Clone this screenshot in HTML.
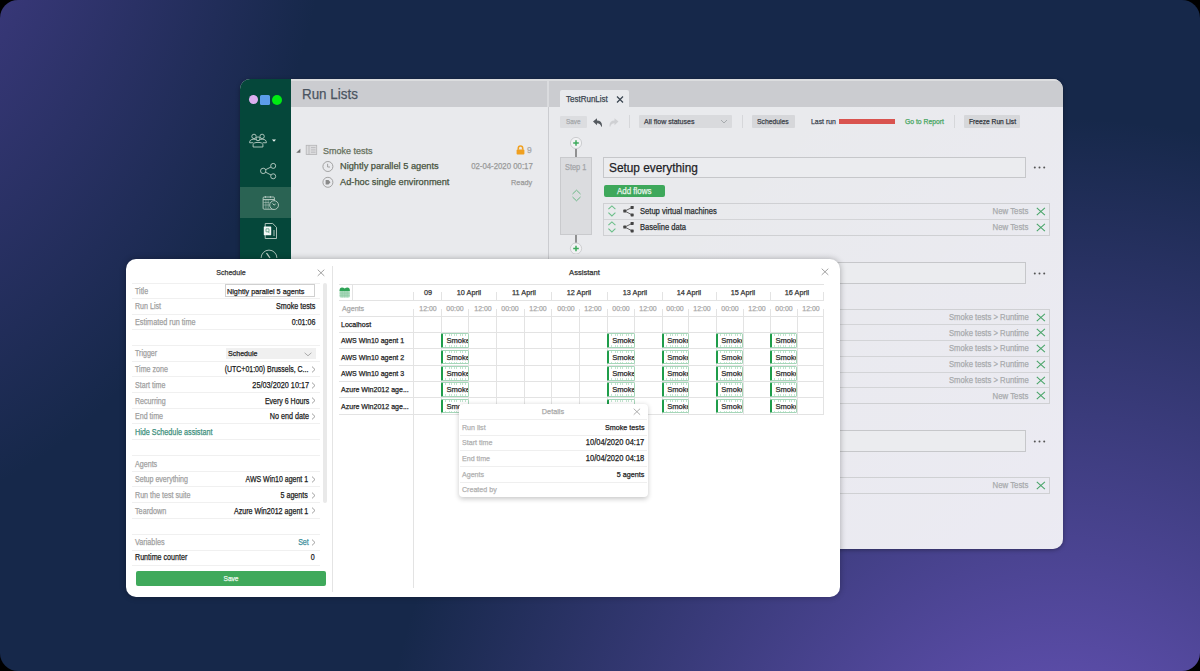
<!DOCTYPE html>
<html><head><meta charset="utf-8">
<style>
*{box-sizing:border-box;margin:0;padding:0}
html,body{width:1200px;height:671px;overflow:hidden;background:#000}
body{font-family:"Liberation Sans",sans-serif;position:relative}
#bg{position:absolute;left:0;top:0;width:1200px;height:671px;border-radius:18px;overflow:hidden;
background:
 radial-gradient(ellipse 516px 771px at -173px -243px, rgba(84,68,158,1) 0%, rgba(84,68,158,0) 100%),
 radial-gradient(ellipse 687px 733px at 1061px 851px, rgba(111,87,195,1) 0%, rgba(111,87,195,0) 100%),
 #16284a;}
.a{position:absolute}
.t{position:absolute;white-space:nowrap;line-height:1;-webkit-text-stroke:0.25px currentColor}
#main{position:absolute;left:240px;top:79px;width:823px;height:470px;border-radius:10px;overflow:hidden;background:#e9eaed;box-shadow:0 1px 4px rgba(0,0,0,.35)}
#modal{position:absolute;left:126px;top:259px;width:714px;height:338.3px;border-radius:10px;overflow:hidden;background:#fff;box-shadow:0 0 6px rgba(0,0,0,.3)}
.in{position:absolute;left:0;top:0;width:1200px;height:671px}
</style></head><body>
<div id="bg">

<div id="main"><div class="in" style="left:-240px;top:-79px">
<div class="a" style="left:240.00px;top:79.00px;width:51.00px;height:470.00px;background:#05473a"></div>
<div class="a" style="left:248.80px;top:94.60px;width:9.60px;height:9.80px;border-radius:50%;background:#dcaef0"></div>
<div class="a" style="left:260.20px;top:94.70px;width:10.00px;height:10.10px;border-radius:1.5px;background:#5c9de9"></div>
<div class="a" style="left:271.80px;top:94.60px;width:10.30px;height:10.30px;border-radius:50%;background:#00ec12"></div>
<div class="a" style="left:240.00px;top:186.80px;width:51.00px;height:30.80px;background:#2a6353"></div>
<div class="a" style="left:291.00px;top:79.00px;width:772.00px;height:27.50px;background:#cbccd0"></div>
<div class="a" style="left:548.00px;top:106.50px;width:1.00px;height:442.50px;background:#cbccd0"></div>
<div class="a" style="left:547.20px;top:79.00px;width:1.80px;height:27.50px;background:#dadbde"></div>
<div class="a" style="left:291.00px;top:79.00px;width:772.00px;height:1.60px;background:#dcdddf"></div>
<div class="a" style="left:291.00px;top:106.50px;width:772.00px;height:442.50px;background:linear-gradient(135deg, rgba(240,235,255,0) 40%, rgba(240,235,255,0.32) 100%)"></div>
<div class="t" style="left:302.00px;top:87.00px;font-size:14.74px;color:#4a5460;transform:scaleX(0.9091);transform-origin:0 0;">Run Lists</div>
<div class="a" style="left:560.00px;top:90.00px;width:69.00px;height:17.00px;background:#e9eaed;border-radius:2px 2px 0 0"></div>
<div class="t" style="left:566.00px;top:95.00px;font-size:8.80px;color:#3a4550;transform:scaleX(0.9091);transform-origin:0 0;">TestRunList</div>
<svg class="a" style="left:616.00px;top:96.00px;" width="8" height="7" viewBox="0 0 8 7"><path d="M1 0.5L7 6.5M7 0.5L1 6.5" stroke="#3a4550" stroke-width="1.2"/></svg>
<svg class="a" style="left:240.00px;top:128.00px;" width="51" height="131" viewBox="0 0 51 131"><g fill="none" stroke="#bccfc6" stroke-width="0.9">
<circle cx="14" cy="8.4" r="2.2"/><circle cx="22.1" cy="8.4" r="2.2"/><circle cx="18" cy="10.8" r="1.9"/>
<path d="M13.3 14.75 H9.6 Q9.6 11.2 13.8 11.2 Q15.6 11.2 16.4 12.2"/><path d="M22.7 14.75 H26.4 Q26.4 11.2 22.2 11.2 Q20.4 11.2 19.6 12.2"/>
<path d="M13.1 19 L13.1 16.6 Q13.5 14.4 18 14.4 Q22.5 14.4 22.9 16.6 L22.9 19 Z"/>
<path d="M31.9 11.5 L36 11.5 L34 13.8 Z" fill="#f0f6f2" stroke="none"/>
<circle cx="33.2" cy="37.9" r="2.5"/><circle cx="23.2" cy="42.9" r="2.7"/><circle cx="33.2" cy="48.3" r="2.5"/>
<path d="M25.6 41.7 L31 39 M25.6 44.2 L31 47"/>
<rect x="23.1" y="69.0" width="11.3" height="12.2" rx="1"/><path d="M25.4 68.2 v1.6 M30.4 68.2 v1.6 M23.1 71.6 H34.4" stroke-width="1"/><path d="M25.9 72 v8.6 M28.2 72 v8.6 M23.5 74.5 h6 M23.5 77 h6" stroke-width="0.5"/>
<circle cx="34.1" cy="77.1" r="4.4" fill="#2a6353"/><path d="M32.6 75.4 L34.1 77.1 L35.6 76" stroke-width="1"/>
<path d="M25.2 95.5 h7.5 l3.8 3.8 v11.2 h-11.3 Z"/>
<rect x="23.8" y="98.5" width="7.4" height="8.8" rx="0.6" fill="#f4f8f6" stroke="none"/><path d="M26 100.8 h3 v3 h-3 Z M28.2 103.6 l1.2 1.6" stroke="#5a9a80" stroke-width="0.8"/>
<path d="M33 103 h2 M33 105 h2 M33 107 h2"/>
<path d="M21.1 130 A7.9 7.9 0 0 1 36.9 130"/><path d="M26.5 125 L30 130" stroke-width="1.3"/></g></svg>
<svg class="a" style="left:295.00px;top:144.00px;" width="24" height="12" viewBox="0 0 24 12"><path d="M1.2 8.7 L5.4 8.7 L5.4 4.8 Z" fill="#707070"/>
<rect x="11.2" y="1.3" width="10.5" height="9.2" fill="#dcdcde" stroke="#b4b4b6" stroke-width="0.8"/>
<path d="M14 1.3 V10.5 M16 3.6 h4.5 M16 5.9 h4.5 M16 8.2 h4.5" stroke="#b4b4b6" stroke-width="0.8"/></svg>
<div class="t" style="left:323.00px;top:147.00px;font-size:9.00px;color:#66705c;">Smoke tests</div>
<svg class="a" style="left:515.00px;top:144.00px;" width="11" height="12" viewBox="0 0 11 12"><path d="M3.3 5.8 V4.2 A2.2 2.2 0 0 1 7.7 4.2 V5.8" fill="none" stroke="#f0a020" stroke-width="1.6"/>
<rect x="1.6" y="5.6" width="7.8" height="5" rx="0.8" fill="#f0a020"/></svg>
<div class="t" style="left:527.00px;top:146.00px;font-size:8.50px;color:#a8a8a8;">9</div>
<svg class="a" style="left:320.00px;top:160.00px;" width="16" height="30" viewBox="0 0 16 30"><g fill="none" stroke="#9a9a9a" stroke-width="0.9"><circle cx="7.9" cy="6.5" r="5"/><path d="M7.6 3.8 V7 H10"/>
<circle cx="7.9" cy="22.3" r="5"/></g><path d="M5.6 20 L8.5 20 L10.5 22.2 L8.4 24.4 L5.6 24.4 Z" fill="#8a8a8a"/></svg>
<div class="t" style="left:340.00px;top:162.00px;font-size:8.79px;color:#485440;transform:scaleX(1.0526);transform-origin:0 0;">Nightly parallel 5 agents</div>
<div class="t" style="left:340.00px;top:178.00px;font-size:8.79px;color:#485440;transform:scaleX(1.0526);transform-origin:0 0;">Ad-hoc single environment</div>
<div class="t" style="right:667.70px;top:162.00px;font-size:8.58px;color:#9a9a9a;transform:scaleX(0.9091);transform-origin:100% 0;">02-04-2020 00:17</div>
<div class="t" style="right:667.70px;top:179.00px;font-size:8.03px;color:#9a9a9a;transform:scaleX(0.9091);transform-origin:100% 0;">Ready</div>
<div class="a" style="left:560.00px;top:115.50px;width:27.00px;height:12.30px;background:#dcdde0;border-radius:1px"></div>
<div class="t" style="left:565.50px;top:118.00px;font-size:7.04px;color:#a4a7aa;transform:scaleX(0.9091);transform-origin:0 0;">Save</div>
<svg class="a" style="left:591.00px;top:117.00px;" width="30" height="11" viewBox="0 0 30 11"><path d="M2 4.6 L6 1.3 V3.4 Q10.8 3.4 11 8.3 Q11 9.8 10.4 10 Q9.6 6.5 6 6.2 V8.2 Z" fill="#555a60"/>
<path d="M27.5 4.6 L23.5 1.3 V3.4 Q18.7 3.4 18.5 8.3 Q18.5 9.8 19.1 10 Q19.9 6.5 23.5 6.2 V8.2 Z" fill="#cfd0d3"/></svg>
<div class="a" style="left:628.50px;top:115.00px;width:1.00px;height:13.00px;background:#d6d7da"></div>
<div class="a" style="left:638.50px;top:115.30px;width:93.50px;height:12.50px;background:#d9dadd;border-radius:1px"></div>
<div class="t" style="left:644.20px;top:118.00px;font-size:7.74px;color:#3a4048;transform:scaleX(0.9091);transform-origin:0 0;">All flow statuses</div>
<svg class="a" style="left:720.00px;top:119.00px;" width="8" height="5" viewBox="0 0 8 5"><path d="M1 1 L4 4 L7 1" fill="none" stroke="#9a9ea2" stroke-width="0.8"/></svg>
<div class="a" style="left:741.80px;top:115.00px;width:1.00px;height:13.00px;background:#d6d7da"></div>
<div class="a" style="left:751.70px;top:115.30px;width:43.60px;height:12.50px;background:#d6d7da;border-radius:1px"></div>
<div class="t" style="left:757.00px;top:118.00px;font-size:7.48px;color:#3a4048;transform:scaleX(0.9091);transform-origin:0 0;">Schedules</div>
<div class="t" style="left:811.00px;top:118.00px;font-size:7.59px;color:#3a4550;transform:scaleX(0.9091);transform-origin:0 0;">Last run</div>
<div class="a" style="left:839.40px;top:119.40px;width:56.00px;height:5.00px;background:#d9534f"></div>
<div class="t" style="left:905.00px;top:118.00px;font-size:7.48px;color:#45a560;transform:scaleX(0.9091);transform-origin:0 0;">Go to Report</div>
<div class="a" style="left:953.60px;top:115.00px;width:1.00px;height:13.00px;background:#d6d7da"></div>
<div class="a" style="left:964.00px;top:115.40px;width:56.00px;height:12.20px;background:#d6d7da;border-radius:1px"></div>
<div class="t" style="left:969.00px;top:118.00px;font-size:7.33px;color:#2f353c;transform:scaleX(0.9091);transform-origin:0 0;">Freeze Run List</div>
<svg class="a" style="left:566.00px;top:134.00px;" width="20" height="120" viewBox="0 0 20 120"><defs><g id="plus"><circle cx="10" cy="9" r="5.6" fill="#f2f2f4" stroke="#c8c9cc" stroke-width="0.9"/><path d="M10 6.2 V11.8 M7.2 9 H12.8" stroke="#3daa5c" stroke-width="1.5"/></g></defs>
<path d="M10 15 V23 M10 101 V109" stroke="#6a6a6a" stroke-width="1.4"/><use href="#plus"/><use href="#plus" y="105.5"/></svg>
<div class="a" style="left:559.80px;top:156.50px;width:32.70px;height:78.00px;background:#dbdcdf;border:1px solid #c9cacd"></div>
<div class="t" style="left:565.20px;top:164.00px;font-size:8.14px;color:#a3a5a8;transform:scaleX(0.9091);transform-origin:0 0;">Step 1</div>
<svg class="a" style="left:571.00px;top:189.00px;" width="11" height="13" viewBox="0 0 11 13"><path d="M1.5 5 L5.5 1.2 L9.5 5 M1.5 8 L5.5 11.8 L9.5 8" fill="none" stroke="#5fb47c" stroke-width="0.9"/></svg>
<div class="a" style="left:603.30px;top:156.50px;width:422.50px;height:21.50px;border:1px solid #c6c7ca;background:#ebecef"></div>
<svg class="a" style="left:1033.00px;top:164.75px;" width="14" height="5" viewBox="0 0 14 5"><circle cx="1.8" cy="2.5" r="1" fill="#555"/><circle cx="6.5" cy="2.5" r="1" fill="#555"/><circle cx="11.2" cy="2.5" r="1" fill="#555"/></svg>
<div class="t" style="left:609.00px;top:161.00px;font-size:13.04px;color:#1e2226;transform:scaleX(0.9091);transform-origin:0 0;">Setup everything</div>
<div class="a" style="left:603.60px;top:184.50px;width:61.70px;height:12.20px;background:#3ea85b;border-radius:2px"></div>
<div class="t" style="left:617.00px;top:187.00px;font-size:8.76px;color:#e8f4ec;transform:scaleX(0.9091);transform-origin:0 0;">Add flows</div>
<svg width="0" height="0" style="position:absolute"><defs>
<g id="frow"><path d="M2.4 6.1 L5.9 2.9 L9.4 6.1 M2.4 9.7 L5.9 12.9 L9.4 9.7" fill="none" stroke="#6cbf8a" stroke-width="1.1"/>
<path d="M18.75 8.05 L26.15 4.4 M18.75 8.05 L26.15 11.9" stroke="#555" stroke-width="0.9"/>
<rect x="17.3" y="6.6" width="2.9" height="2.9" rx="0.6" fill="#444"/><rect x="24.6" y="2.9" width="3.1" height="3" rx="0.6" fill="#444"/><rect x="24.6" y="10.4" width="3.1" height="3" rx="0.6" fill="#444"/></g>
</defs></svg>
<div class="a" style="left:603.30px;top:203.10px;width:446.50px;height:32.50px;border:1px solid #cfd0d3"></div>
<svg class="a" style="left:606.00px;top:203.10px;" width="30" height="15" viewBox="0 0 30 15"><use href="#frow"/></svg>
<div class="t" style="left:640.00px;top:207.00px;font-size:8.36px;color:#2a2e30;transform:scaleX(0.9091);transform-origin:0 0;">Setup virtual machines</div>
<div class="t" style="right:171.20px;top:207.00px;font-size:8.58px;color:#a8aaad;transform:scaleX(0.9091);transform-origin:100% 0;">New Tests</div>
<svg class="a" style="left:1036.00px;top:207.10px;" width="10" height="9" viewBox="0 0 10 9"><path d="M0.8 0.8 L8.9 8.2 M8.9 0.8 L0.8 8.2" stroke="#4aa56a" stroke-width="1.1"/></svg>
<div class="a" style="left:604.00px;top:218.85px;width:445.00px;height:1.00px;background:#d3d4d7"></div>
<svg class="a" style="left:606.00px;top:218.85px;" width="30" height="15" viewBox="0 0 30 15"><use href="#frow"/></svg>
<div class="t" style="left:640.00px;top:223.00px;font-size:8.36px;color:#2a2e30;transform:scaleX(0.9091);transform-origin:0 0;">Baseline data</div>
<div class="t" style="right:171.20px;top:223.00px;font-size:8.58px;color:#a8aaad;transform:scaleX(0.9091);transform-origin:100% 0;">New Tests</div>
<svg class="a" style="left:1036.00px;top:222.85px;" width="10" height="9" viewBox="0 0 10 9"><path d="M0.8 0.8 L8.9 8.2 M8.9 0.8 L0.8 8.2" stroke="#4aa56a" stroke-width="1.1"/></svg>
<div class="a" style="left:603.30px;top:261.70px;width:422.50px;height:22.60px;border:1px solid #c6c7ca;background:#ebecef"></div>
<svg class="a" style="left:1033.00px;top:270.50px;" width="14" height="5" viewBox="0 0 14 5"><circle cx="1.8" cy="2.5" r="1" fill="#555"/><circle cx="6.5" cy="2.5" r="1" fill="#555"/><circle cx="11.2" cy="2.5" r="1" fill="#555"/></svg>
<div class="a" style="left:603.30px;top:308.70px;width:446.50px;height:95.50px;border:1px solid #cfd0d3"></div>
<svg class="a" style="left:606.00px;top:308.70px;" width="30" height="15" viewBox="0 0 30 15"><use href="#frow"/></svg>
<div class="t" style="right:171.20px;top:313.00px;font-size:8.47px;color:#a8aaad;transform:scaleX(0.9091);transform-origin:100% 0;">Smoke tests &gt; Runtime</div>
<svg class="a" style="left:1036.00px;top:312.70px;" width="10" height="9" viewBox="0 0 10 9"><path d="M0.8 0.8 L8.9 8.2 M8.9 0.8 L0.8 8.2" stroke="#4aa56a" stroke-width="1.1"/></svg>
<div class="a" style="left:604.00px;top:324.45px;width:445.00px;height:1.00px;background:#d3d4d7"></div>
<svg class="a" style="left:606.00px;top:324.45px;" width="30" height="15" viewBox="0 0 30 15"><use href="#frow"/></svg>
<div class="t" style="right:171.20px;top:329.00px;font-size:8.47px;color:#a8aaad;transform:scaleX(0.9091);transform-origin:100% 0;">Smoke tests &gt; Runtime</div>
<svg class="a" style="left:1036.00px;top:328.45px;" width="10" height="9" viewBox="0 0 10 9"><path d="M0.8 0.8 L8.9 8.2 M8.9 0.8 L0.8 8.2" stroke="#4aa56a" stroke-width="1.1"/></svg>
<div class="a" style="left:604.00px;top:340.20px;width:445.00px;height:1.00px;background:#d3d4d7"></div>
<svg class="a" style="left:606.00px;top:340.20px;" width="30" height="15" viewBox="0 0 30 15"><use href="#frow"/></svg>
<div class="t" style="right:171.20px;top:344.00px;font-size:8.47px;color:#a8aaad;transform:scaleX(0.9091);transform-origin:100% 0;">Smoke tests &gt; Runtime</div>
<svg class="a" style="left:1036.00px;top:344.20px;" width="10" height="9" viewBox="0 0 10 9"><path d="M0.8 0.8 L8.9 8.2 M8.9 0.8 L0.8 8.2" stroke="#4aa56a" stroke-width="1.1"/></svg>
<div class="a" style="left:604.00px;top:355.95px;width:445.00px;height:1.00px;background:#d3d4d7"></div>
<svg class="a" style="left:606.00px;top:355.95px;" width="30" height="15" viewBox="0 0 30 15"><use href="#frow"/></svg>
<div class="t" style="right:171.20px;top:360.00px;font-size:8.47px;color:#a8aaad;transform:scaleX(0.9091);transform-origin:100% 0;">Smoke tests &gt; Runtime</div>
<svg class="a" style="left:1036.00px;top:359.95px;" width="10" height="9" viewBox="0 0 10 9"><path d="M0.8 0.8 L8.9 8.2 M8.9 0.8 L0.8 8.2" stroke="#4aa56a" stroke-width="1.1"/></svg>
<div class="a" style="left:604.00px;top:371.70px;width:445.00px;height:1.00px;background:#d3d4d7"></div>
<svg class="a" style="left:606.00px;top:371.70px;" width="30" height="15" viewBox="0 0 30 15"><use href="#frow"/></svg>
<div class="t" style="right:171.20px;top:376.00px;font-size:8.47px;color:#a8aaad;transform:scaleX(0.9091);transform-origin:100% 0;">Smoke tests &gt; Runtime</div>
<svg class="a" style="left:1036.00px;top:375.70px;" width="10" height="9" viewBox="0 0 10 9"><path d="M0.8 0.8 L8.9 8.2 M8.9 0.8 L0.8 8.2" stroke="#4aa56a" stroke-width="1.1"/></svg>
<div class="a" style="left:604.00px;top:387.45px;width:445.00px;height:1.00px;background:#d3d4d7"></div>
<svg class="a" style="left:606.00px;top:387.45px;" width="30" height="15" viewBox="0 0 30 15"><use href="#frow"/></svg>
<div class="t" style="right:171.20px;top:392.00px;font-size:8.58px;color:#a8aaad;transform:scaleX(0.9091);transform-origin:100% 0;">New Tests</div>
<svg class="a" style="left:1036.00px;top:391.45px;" width="10" height="9" viewBox="0 0 10 9"><path d="M0.8 0.8 L8.9 8.2 M8.9 0.8 L0.8 8.2" stroke="#4aa56a" stroke-width="1.1"/></svg>
<div class="a" style="left:603.30px;top:430.00px;width:422.50px;height:22.40px;border:1px solid #c6c7ca;background:#ebecef"></div>
<svg class="a" style="left:1033.00px;top:438.70px;" width="14" height="5" viewBox="0 0 14 5"><circle cx="1.8" cy="2.5" r="1" fill="#555"/><circle cx="6.5" cy="2.5" r="1" fill="#555"/><circle cx="11.2" cy="2.5" r="1" fill="#555"/></svg>
<div class="a" style="left:603.30px;top:476.80px;width:446.50px;height:16.75px;border:1px solid #cfd0d3"></div>
<svg class="a" style="left:606.00px;top:476.80px;" width="30" height="15" viewBox="0 0 30 15"><use href="#frow"/></svg>
<div class="t" style="right:171.20px;top:481.00px;font-size:8.58px;color:#a8aaad;transform:scaleX(0.9091);transform-origin:100% 0;">New Tests</div>
<svg class="a" style="left:1036.00px;top:480.80px;" width="10" height="9" viewBox="0 0 10 9"><path d="M0.8 0.8 L8.9 8.2 M8.9 0.8 L0.8 8.2" stroke="#4aa56a" stroke-width="1.1"/></svg>
</div></div>
<div id="modal"><div class="in" style="left:-126px;top:-259px">
<div class="a" style="left:331.50px;top:266.00px;width:1.00px;height:326.00px;background:#e4e4e4"></div>
<div class="t" style="left:-69.50px;width:600px;text-align:center;top:269.00px;font-size:7.76px;color:#333;transform:scaleX(0.9091);transform-origin:50% 0;">Schedule</div>
<svg class="a" style="left:316.50px;top:268.80px;" width="8" height="8" viewBox="0 0 8 8"><path d="M0.7 0.7 L7.3 6.9 M7.3 0.7 L0.7 6.9" stroke="#8a8a8a" stroke-width="0.8"/></svg>
<div class="a" style="left:322.80px;top:283.00px;width:4.20px;height:220.00px;background:#e9e9e9;border-radius:2px"></div>
<div class="a" style="left:131.80px;top:282.70px;width:188.20px;height:1.00px;background:#f0f0f0"></div>
<div class="a" style="left:131.80px;top:298.10px;width:188.20px;height:1.00px;background:#f0f0f0"></div>
<div class="a" style="left:131.80px;top:313.70px;width:188.20px;height:1.00px;background:#f0f0f0"></div>
<div class="a" style="left:131.80px;top:329.30px;width:188.20px;height:1.00px;background:#f0f0f0"></div>
<div class="a" style="left:131.80px;top:345.00px;width:188.20px;height:1.00px;background:#f0f0f0"></div>
<div class="a" style="left:131.80px;top:360.50px;width:188.20px;height:1.00px;background:#f0f0f0"></div>
<div class="a" style="left:131.80px;top:376.10px;width:188.20px;height:1.00px;background:#f0f0f0"></div>
<div class="a" style="left:131.80px;top:391.70px;width:188.20px;height:1.00px;background:#f0f0f0"></div>
<div class="a" style="left:131.80px;top:407.50px;width:188.20px;height:1.00px;background:#f0f0f0"></div>
<div class="a" style="left:131.80px;top:423.10px;width:188.20px;height:1.00px;background:#f0f0f0"></div>
<div class="a" style="left:131.80px;top:439.10px;width:188.20px;height:1.00px;background:#f0f0f0"></div>
<div class="a" style="left:131.80px;top:455.00px;width:188.20px;height:1.00px;background:#f0f0f0"></div>
<div class="a" style="left:131.80px;top:470.70px;width:188.20px;height:1.00px;background:#f0f0f0"></div>
<div class="a" style="left:131.80px;top:486.30px;width:188.20px;height:1.00px;background:#f0f0f0"></div>
<div class="a" style="left:131.80px;top:502.00px;width:188.20px;height:1.00px;background:#f0f0f0"></div>
<div class="a" style="left:131.80px;top:518.00px;width:188.20px;height:1.00px;background:#f0f0f0"></div>
<div class="a" style="left:131.80px;top:533.80px;width:188.20px;height:1.00px;background:#f0f0f0"></div>
<div class="a" style="left:131.80px;top:549.50px;width:188.20px;height:1.00px;background:#f0f0f0"></div>
<div class="a" style="left:131.80px;top:565.10px;width:188.20px;height:1.00px;background:#f0f0f0"></div>
<div class="t" style="left:135.00px;top:287.00px;font-size:8.52px;color:#a0a0a0;transform:scaleX(0.8333);transform-origin:0 0;">Title</div>
<div class="a" style="left:224.70px;top:284.20px;width:90.00px;height:12.80px;border:1px solid #d0d0d0;background:#fff"></div>
<div class="t" style="left:226.80px;top:288.00px;font-size:7.99px;color:#222;transform:scaleX(0.9091);transform-origin:0 0;">Nightly parallel 5 agents</div>
<div class="t" style="left:135.00px;top:302.00px;font-size:8.52px;color:#a0a0a0;transform:scaleX(0.8333);transform-origin:0 0;">Run List</div>
<div class="t" style="right:885.00px;top:302.00px;font-size:8.62px;color:#1a1a1a;transform:scaleX(0.8333);transform-origin:100% 0;">Smoke tests</div>
<div class="t" style="left:135.00px;top:318.00px;font-size:8.71px;color:#a0a0a0;transform:scaleX(0.8333);transform-origin:0 0;">Estimated run time</div>
<div class="t" style="right:885.00px;top:318.00px;font-size:8.52px;color:#1a1a1a;transform:scaleX(0.8333);transform-origin:100% 0;">0:01:06</div>
<div class="t" style="left:135.00px;top:349.00px;font-size:8.51px;color:#a0a0a0;transform:scaleX(0.8333);transform-origin:0 0;">Trigger</div>
<div class="a" style="left:225.50px;top:348.00px;width:90.00px;height:11.20px;background:#f0f0f0"></div>
<div class="t" style="left:227.70px;top:350.00px;font-size:7.78px;color:#222;transform:scaleX(0.9091);transform-origin:0 0;">Schedule</div>
<svg class="a" style="left:303.50px;top:351.80px;" width="8" height="5" viewBox="0 0 8 5"><path d="M0.6 0.8 L4 3.8 L7.4 0.8" fill="none" stroke="#999" stroke-width="0.8"/></svg>
<div class="t" style="left:135.00px;top:365.00px;font-size:8.52px;color:#a0a0a0;transform:scaleX(0.8333);transform-origin:0 0;">Time zone</div>
<div class="t" style="right:891.20px;top:365.00px;font-size:8.36px;color:#1a1a1a;transform:scaleX(0.8333);transform-origin:100% 0;">(UTC+01:00) Brussels, C...</div>
<svg class="a" style="left:311.00px;top:365.70px;" width="5" height="7" viewBox="0 0 5 7"><path d="M1 0.6 L4 3.5 L1 6.4" fill="none" stroke="#888" stroke-width="0.8"/></svg>
<div class="t" style="left:135.00px;top:381.00px;font-size:8.52px;color:#a0a0a0;transform:scaleX(0.8333);transform-origin:0 0;">Start time</div>
<div class="t" style="right:891.20px;top:381.00px;font-size:8.76px;color:#1a1a1a;transform:scaleX(0.8333);transform-origin:100% 0;">25/03/2020 10:17</div>
<svg class="a" style="left:311.00px;top:381.50px;" width="5" height="7" viewBox="0 0 5 7"><path d="M1 0.6 L4 3.5 L1 6.4" fill="none" stroke="#888" stroke-width="0.8"/></svg>
<div class="t" style="left:135.00px;top:397.00px;font-size:8.52px;color:#a0a0a0;transform:scaleX(0.8333);transform-origin:0 0;">Recurring</div>
<div class="t" style="right:891.20px;top:397.00px;font-size:8.42px;color:#1a1a1a;transform:scaleX(0.8333);transform-origin:100% 0;">Every 6 Hours</div>
<svg class="a" style="left:311.00px;top:397.20px;" width="5" height="7" viewBox="0 0 5 7"><path d="M1 0.6 L4 3.5 L1 6.4" fill="none" stroke="#888" stroke-width="0.8"/></svg>
<div class="t" style="left:135.00px;top:412.00px;font-size:8.52px;color:#a0a0a0;transform:scaleX(0.8333);transform-origin:0 0;">End time</div>
<div class="t" style="right:891.20px;top:412.00px;font-size:8.62px;color:#1a1a1a;transform:scaleX(0.8333);transform-origin:100% 0;">No end date</div>
<svg class="a" style="left:311.00px;top:412.90px;" width="5" height="7" viewBox="0 0 5 7"><path d="M1 0.6 L4 3.5 L1 6.4" fill="none" stroke="#888" stroke-width="0.8"/></svg>
<div class="t" style="left:135.00px;top:428.00px;font-size:8.69px;color:#3d8f7c;transform:scaleX(0.8333);transform-origin:0 0;">Hide Schedule assistant</div>
<div class="t" style="left:135.00px;top:460.00px;font-size:8.56px;color:#a0a0a0;transform:scaleX(0.8333);transform-origin:0 0;">Agents</div>
<div class="t" style="left:135.00px;top:475.00px;font-size:8.47px;color:#a0a0a0;transform:scaleX(0.8333);transform-origin:0 0;">Setup everything</div>
<div class="t" style="right:891.70px;top:475.00px;font-size:8.38px;color:#1a1a1a;transform:scaleX(0.8333);transform-origin:100% 0;">AWS Win10 agent 1</div>
<svg class="a" style="left:311.00px;top:476.00px;" width="5" height="7" viewBox="0 0 5 7"><path d="M1 0.6 L4 3.5 L1 6.4" fill="none" stroke="#888" stroke-width="0.8"/></svg>
<div class="t" style="left:135.00px;top:491.00px;font-size:8.57px;color:#a0a0a0;transform:scaleX(0.8333);transform-origin:0 0;">Run the test suite</div>
<div class="t" style="right:891.70px;top:491.00px;font-size:8.57px;color:#1a1a1a;transform:scaleX(0.8333);transform-origin:100% 0;">5 agents</div>
<svg class="a" style="left:311.00px;top:491.60px;" width="5" height="7" viewBox="0 0 5 7"><path d="M1 0.6 L4 3.5 L1 6.4" fill="none" stroke="#888" stroke-width="0.8"/></svg>
<div class="t" style="left:135.00px;top:507.00px;font-size:8.69px;color:#a0a0a0;transform:scaleX(0.8333);transform-origin:0 0;">Teardown</div>
<div class="t" style="right:891.70px;top:507.00px;font-size:8.56px;color:#1a1a1a;transform:scaleX(0.8333);transform-origin:100% 0;">Azure Win2012 agent 1</div>
<svg class="a" style="left:311.00px;top:507.30px;" width="5" height="7" viewBox="0 0 5 7"><path d="M1 0.6 L4 3.5 L1 6.4" fill="none" stroke="#888" stroke-width="0.8"/></svg>
<div class="t" style="left:135.00px;top:538.00px;font-size:8.70px;color:#a0a0a0;transform:scaleX(0.8333);transform-origin:0 0;">Variables</div>
<div class="t" style="right:891.70px;top:538.00px;font-size:8.52px;color:#3d8f9c;transform:scaleX(0.8333);transform-origin:100% 0;">Set</div>
<svg class="a" style="left:311.00px;top:538.60px;" width="5" height="7" viewBox="0 0 5 7"><path d="M1 0.6 L4 3.5 L1 6.4" fill="none" stroke="#888" stroke-width="0.8"/></svg>
<div class="t" style="left:135.00px;top:553.00px;font-size:8.57px;color:#222;transform:scaleX(0.8333);transform-origin:0 0;">Runtime counter</div>
<div class="t" style="right:885.20px;top:553.00px;font-size:8.52px;color:#1a1a1a;transform:scaleX(0.8333);transform-origin:100% 0;">0</div>
<div class="a" style="left:135.60px;top:571.40px;width:190.00px;height:14.60px;background:#3fa95b;border-radius:2px"></div>
<div class="t" style="left:-69.40px;width:600px;text-align:center;top:575.00px;font-size:7.26px;color:#eef7f0;transform:scaleX(0.9091);transform-origin:50% 0;">Save</div>
<div class="t" style="left:284.50px;width:600px;text-align:center;top:269.00px;font-size:7.60px;color:#333;">Assistant</div>
<svg class="a" style="left:821.00px;top:268.30px;" width="8" height="8" viewBox="0 0 8 8"><path d="M0.7 0.7 L7.3 6.9 M7.3 0.7 L0.7 6.9" stroke="#8a8a8a" stroke-width="0.8"/></svg>
<div class="a" style="left:338.50px;top:283.50px;width:485.50px;height:1.00px;background:#e3e3e3"></div>
<div class="a" style="left:338.50px;top:299.50px;width:485.50px;height:1.00px;background:#e3e3e3"></div>
<div class="a" style="left:338.50px;top:315.80px;width:485.50px;height:1.00px;background:#e3e3e3"></div>
<div class="a" style="left:338.50px;top:332.10px;width:485.50px;height:1.00px;background:#e3e3e3"></div>
<div class="a" style="left:338.50px;top:348.40px;width:485.50px;height:1.00px;background:#e3e3e3"></div>
<div class="a" style="left:338.50px;top:364.80px;width:485.50px;height:1.00px;background:#e3e3e3"></div>
<div class="a" style="left:338.50px;top:381.10px;width:485.50px;height:1.00px;background:#e3e3e3"></div>
<div class="a" style="left:338.50px;top:397.40px;width:485.50px;height:1.00px;background:#e3e3e3"></div>
<div class="a" style="left:338.50px;top:413.80px;width:485.50px;height:1.00px;background:#e3e3e3"></div>
<div class="a" style="left:351.60px;top:284.00px;width:1.00px;height:16.00px;background:#e3e3e3"></div>
<div class="a" style="left:413.30px;top:316.00px;width:1.00px;height:272.00px;background:#e3e3e3"></div>
<div class="a" style="left:413.30px;top:308.50px;width:1.00px;height:8.00px;background:#e3e3e3"></div>
<div class="a" style="left:413.30px;top:292.00px;width:1.00px;height:8.00px;background:#e3e3e3"></div>
<div class="a" style="left:440.70px;top:292.00px;width:1.00px;height:8.00px;background:#e3e3e3"></div>
<div class="a" style="left:496.00px;top:292.00px;width:1.00px;height:8.00px;background:#e3e3e3"></div>
<div class="a" style="left:551.30px;top:292.00px;width:1.00px;height:8.00px;background:#e3e3e3"></div>
<div class="a" style="left:606.50px;top:292.00px;width:1.00px;height:8.00px;background:#e3e3e3"></div>
<div class="a" style="left:661.50px;top:292.00px;width:1.00px;height:8.00px;background:#e3e3e3"></div>
<div class="a" style="left:715.60px;top:292.00px;width:1.00px;height:8.00px;background:#e3e3e3"></div>
<div class="a" style="left:769.70px;top:292.00px;width:1.00px;height:8.00px;background:#e3e3e3"></div>
<div class="a" style="left:823.40px;top:292.00px;width:1.00px;height:8.00px;background:#e3e3e3"></div>
<div class="a" style="left:440.70px;top:308.50px;width:1.00px;height:8.00px;background:#e3e3e3"></div>
<div class="a" style="left:440.70px;top:316.00px;width:1.00px;height:98.30px;background:#e3e3e3"></div>
<div class="a" style="left:468.30px;top:308.50px;width:1.00px;height:8.00px;background:#e3e3e3"></div>
<div class="a" style="left:468.30px;top:316.00px;width:1.00px;height:98.30px;background:#e3e3e3"></div>
<div class="a" style="left:496.00px;top:308.50px;width:1.00px;height:8.00px;background:#e3e3e3"></div>
<div class="a" style="left:496.00px;top:316.00px;width:1.00px;height:98.30px;background:#e3e3e3"></div>
<div class="a" style="left:523.60px;top:308.50px;width:1.00px;height:8.00px;background:#e3e3e3"></div>
<div class="a" style="left:523.60px;top:316.00px;width:1.00px;height:98.30px;background:#e3e3e3"></div>
<div class="a" style="left:551.30px;top:308.50px;width:1.00px;height:8.00px;background:#e3e3e3"></div>
<div class="a" style="left:551.30px;top:316.00px;width:1.00px;height:98.30px;background:#e3e3e3"></div>
<div class="a" style="left:578.80px;top:308.50px;width:1.00px;height:8.00px;background:#e3e3e3"></div>
<div class="a" style="left:578.80px;top:316.00px;width:1.00px;height:98.30px;background:#e3e3e3"></div>
<div class="a" style="left:606.50px;top:308.50px;width:1.00px;height:8.00px;background:#e3e3e3"></div>
<div class="a" style="left:606.50px;top:316.00px;width:1.00px;height:98.30px;background:#e3e3e3"></div>
<div class="a" style="left:634.00px;top:308.50px;width:1.00px;height:8.00px;background:#e3e3e3"></div>
<div class="a" style="left:634.00px;top:316.00px;width:1.00px;height:98.30px;background:#e3e3e3"></div>
<div class="a" style="left:661.50px;top:308.50px;width:1.00px;height:8.00px;background:#e3e3e3"></div>
<div class="a" style="left:661.50px;top:316.00px;width:1.00px;height:98.30px;background:#e3e3e3"></div>
<div class="a" style="left:688.30px;top:308.50px;width:1.00px;height:8.00px;background:#e3e3e3"></div>
<div class="a" style="left:688.30px;top:316.00px;width:1.00px;height:98.30px;background:#e3e3e3"></div>
<div class="a" style="left:715.60px;top:308.50px;width:1.00px;height:8.00px;background:#e3e3e3"></div>
<div class="a" style="left:715.60px;top:316.00px;width:1.00px;height:98.30px;background:#e3e3e3"></div>
<div class="a" style="left:742.70px;top:308.50px;width:1.00px;height:8.00px;background:#e3e3e3"></div>
<div class="a" style="left:742.70px;top:316.00px;width:1.00px;height:98.30px;background:#e3e3e3"></div>
<div class="a" style="left:769.70px;top:308.50px;width:1.00px;height:8.00px;background:#e3e3e3"></div>
<div class="a" style="left:769.70px;top:316.00px;width:1.00px;height:98.30px;background:#e3e3e3"></div>
<div class="a" style="left:796.70px;top:308.50px;width:1.00px;height:8.00px;background:#e3e3e3"></div>
<div class="a" style="left:796.70px;top:316.00px;width:1.00px;height:98.30px;background:#e3e3e3"></div>
<div class="a" style="left:823.40px;top:308.50px;width:1.00px;height:8.00px;background:#e3e3e3"></div>
<div class="a" style="left:823.40px;top:316.00px;width:1.00px;height:98.30px;background:#e3e3e3"></div>
<svg class="a" style="left:339.00px;top:287.00px;" width="12" height="11" viewBox="0 0 12 11"><rect x="0.6" y="2.2" width="10.2" height="8.4" rx="1" fill="#a9d9bb"/>
<path d="M0.6 3.2 Q0.6 0.6 3 0.6 Q4.5 0.6 5.7 1.6 Q6.9 0.6 8.4 0.6 Q10.8 0.6 10.8 3.2 V4 H0.6 Z" fill="#2ea356"/>
<path d="M3.2 4 V10.6 M5.7 4 V10.6 M8.2 4 V10.6 M0.6 6.2 H10.8 M0.6 8.4 H10.8" stroke="#8cc9a2" stroke-width="0.5"/></svg>
<div class="t" style="left:127.50px;width:600px;text-align:center;top:289.00px;font-size:8.03px;color:#333;transform:scaleX(0.9091);transform-origin:50% 0;">09</div>
<div class="t" style="left:168.80px;width:600px;text-align:center;top:289.00px;font-size:8.04px;color:#333;transform:scaleX(0.9091);transform-origin:50% 0;">10 April</div>
<div class="t" style="left:224.10px;width:600px;text-align:center;top:289.00px;font-size:8.04px;color:#333;transform:scaleX(0.9091);transform-origin:50% 0;">11 April</div>
<div class="t" style="left:279.30px;width:600px;text-align:center;top:289.00px;font-size:8.04px;color:#333;transform:scaleX(0.9091);transform-origin:50% 0;">12 April</div>
<div class="t" style="left:334.50px;width:600px;text-align:center;top:289.00px;font-size:8.04px;color:#333;transform:scaleX(0.9091);transform-origin:50% 0;">13 April</div>
<div class="t" style="left:388.80px;width:600px;text-align:center;top:289.00px;font-size:8.04px;color:#333;transform:scaleX(0.9091);transform-origin:50% 0;">14 April</div>
<div class="t" style="left:443.20px;width:600px;text-align:center;top:289.00px;font-size:8.04px;color:#333;transform:scaleX(0.9091);transform-origin:50% 0;">15 April</div>
<div class="t" style="left:497.20px;width:600px;text-align:center;top:289.00px;font-size:8.04px;color:#333;transform:scaleX(0.9091);transform-origin:50% 0;">16 April</div>
<div class="t" style="left:342.00px;top:305.00px;font-size:7.84px;color:#a8a8a8;transform:scaleX(0.9091);transform-origin:0 0;">Agents</div>
<div class="t" style="left:127.50px;width:600px;text-align:center;top:305.00px;font-size:7.70px;color:#a8a8a8;transform:scaleX(0.9091);transform-origin:50% 0;">12:00</div>
<div class="t" style="left:155.00px;width:600px;text-align:center;top:305.00px;font-size:7.70px;color:#a8a8a8;transform:scaleX(0.9091);transform-origin:50% 0;">00:00</div>
<div class="t" style="left:182.65px;width:600px;text-align:center;top:305.00px;font-size:7.70px;color:#a8a8a8;transform:scaleX(0.9091);transform-origin:50% 0;">12:00</div>
<div class="t" style="left:210.30px;width:600px;text-align:center;top:305.00px;font-size:7.70px;color:#a8a8a8;transform:scaleX(0.9091);transform-origin:50% 0;">00:00</div>
<div class="t" style="left:237.95px;width:600px;text-align:center;top:305.00px;font-size:7.70px;color:#a8a8a8;transform:scaleX(0.9091);transform-origin:50% 0;">12:00</div>
<div class="t" style="left:265.55px;width:600px;text-align:center;top:305.00px;font-size:7.70px;color:#a8a8a8;transform:scaleX(0.9091);transform-origin:50% 0;">00:00</div>
<div class="t" style="left:293.15px;width:600px;text-align:center;top:305.00px;font-size:7.70px;color:#a8a8a8;transform:scaleX(0.9091);transform-origin:50% 0;">12:00</div>
<div class="t" style="left:320.75px;width:600px;text-align:center;top:305.00px;font-size:7.70px;color:#a8a8a8;transform:scaleX(0.9091);transform-origin:50% 0;">00:00</div>
<div class="t" style="left:348.25px;width:600px;text-align:center;top:305.00px;font-size:7.70px;color:#a8a8a8;transform:scaleX(0.9091);transform-origin:50% 0;">12:00</div>
<div class="t" style="left:375.40px;width:600px;text-align:center;top:305.00px;font-size:7.70px;color:#a8a8a8;transform:scaleX(0.9091);transform-origin:50% 0;">00:00</div>
<div class="t" style="left:402.45px;width:600px;text-align:center;top:305.00px;font-size:7.70px;color:#a8a8a8;transform:scaleX(0.9091);transform-origin:50% 0;">12:00</div>
<div class="t" style="left:429.65px;width:600px;text-align:center;top:305.00px;font-size:7.70px;color:#a8a8a8;transform:scaleX(0.9091);transform-origin:50% 0;">00:00</div>
<div class="t" style="left:456.70px;width:600px;text-align:center;top:305.00px;font-size:7.70px;color:#a8a8a8;transform:scaleX(0.9091);transform-origin:50% 0;">12:00</div>
<div class="t" style="left:483.70px;width:600px;text-align:center;top:305.00px;font-size:7.70px;color:#a8a8a8;transform:scaleX(0.9091);transform-origin:50% 0;">00:00</div>
<div class="t" style="left:510.55px;width:600px;text-align:center;top:305.00px;font-size:7.70px;color:#a8a8a8;transform:scaleX(0.9091);transform-origin:50% 0;">12:00</div>
<div class="t" style="left:341.20px;top:321.00px;font-size:7.76px;color:#1c1c1c;transform:scaleX(0.9091);transform-origin:0 0;">Localhost</div>
<div class="t" style="left:341.20px;top:337.00px;font-size:7.76px;color:#1c1c1c;transform:scaleX(0.9091);transform-origin:0 0;">AWS Win10 agent 1</div>
<div class="t" style="left:341.20px;top:354.00px;font-size:7.76px;color:#1c1c1c;transform:scaleX(0.9091);transform-origin:0 0;">AWS Win10 agent 2</div>
<div class="t" style="left:341.20px;top:370.00px;font-size:7.76px;color:#1c1c1c;transform:scaleX(0.9091);transform-origin:0 0;">AWS Win10 agent 3</div>
<div class="t" style="left:341.20px;top:386.00px;font-size:7.76px;color:#1c1c1c;transform:scaleX(0.9091);transform-origin:0 0;">Azure Win2012 age...</div>
<div class="t" style="left:341.20px;top:403.00px;font-size:7.76px;color:#1c1c1c;transform:scaleX(0.9091);transform-origin:0 0;">Azure Win2012 age...</div>
<div class="a" style="left:441.20px;top:333.20px;width:27.90px;height:14.9px;border:1px solid #a6d6b9;border-left:2.8px solid #1f9d4a;border-radius:1.5px;background:#fff;overflow:hidden"><div class="a" style="left:0.5px;top:0;right:0;height:2px;background:repeating-linear-gradient(90deg,#fff 0 1.2px,#c2e4cf 1.2px 2px,#fff 2px 4.6px,#c2e4cf 4.6px 5.6px)"></div><div class="a" style="left:0.5px;bottom:0;right:0;height:1.6px;background:repeating-linear-gradient(90deg,#fff 0 1.2px,#c8e7d4 1.2px 2px,#fff 2px 4.6px,#c8e7d4 4.6px 5.6px)"></div><div class="t" style="left:3.2px;top:3.2px;font-size:7.6px;color:#2a2a2a">Smoke tests</div></div>
<div class="a" style="left:441.20px;top:349.50px;width:27.90px;height:14.9px;border:1px solid #a6d6b9;border-left:2.8px solid #1f9d4a;border-radius:1.5px;background:#fff;overflow:hidden"><div class="a" style="left:0.5px;top:0;right:0;height:2px;background:repeating-linear-gradient(90deg,#fff 0 1.2px,#c2e4cf 1.2px 2px,#fff 2px 4.6px,#c2e4cf 4.6px 5.6px)"></div><div class="a" style="left:0.5px;bottom:0;right:0;height:1.6px;background:repeating-linear-gradient(90deg,#fff 0 1.2px,#c8e7d4 1.2px 2px,#fff 2px 4.6px,#c8e7d4 4.6px 5.6px)"></div><div class="t" style="left:3.2px;top:3.2px;font-size:7.6px;color:#2a2a2a">Smoke tests</div></div>
<div class="a" style="left:441.20px;top:365.90px;width:27.90px;height:14.9px;border:1px solid #a6d6b9;border-left:2.8px solid #1f9d4a;border-radius:1.5px;background:#fff;overflow:hidden"><div class="a" style="left:0.5px;top:0;right:0;height:2px;background:repeating-linear-gradient(90deg,#fff 0 1.2px,#c2e4cf 1.2px 2px,#fff 2px 4.6px,#c2e4cf 4.6px 5.6px)"></div><div class="a" style="left:0.5px;bottom:0;right:0;height:1.6px;background:repeating-linear-gradient(90deg,#fff 0 1.2px,#c8e7d4 1.2px 2px,#fff 2px 4.6px,#c8e7d4 4.6px 5.6px)"></div><div class="t" style="left:3.2px;top:3.2px;font-size:7.6px;color:#2a2a2a">Smoke tests</div></div>
<div class="a" style="left:441.20px;top:382.20px;width:27.90px;height:14.9px;border:1px solid #a6d6b9;border-left:2.8px solid #1f9d4a;border-radius:1.5px;background:#fff;overflow:hidden"><div class="a" style="left:0.5px;top:0;right:0;height:2px;background:repeating-linear-gradient(90deg,#fff 0 1.2px,#c2e4cf 1.2px 2px,#fff 2px 4.6px,#c2e4cf 4.6px 5.6px)"></div><div class="a" style="left:0.5px;bottom:0;right:0;height:1.6px;background:repeating-linear-gradient(90deg,#fff 0 1.2px,#c8e7d4 1.2px 2px,#fff 2px 4.6px,#c8e7d4 4.6px 5.6px)"></div><div class="t" style="left:3.2px;top:3.2px;font-size:7.6px;color:#2a2a2a">Smoke tests</div></div>
<div class="a" style="left:441.20px;top:398.50px;width:27.90px;height:14.9px;border:1px solid #a6d6b9;border-left:2.8px solid #1f9d4a;border-radius:1.5px;background:#fff;overflow:hidden"><div class="a" style="left:0.5px;top:0;right:0;height:2px;background:repeating-linear-gradient(90deg,#fff 0 1.2px,#c2e4cf 1.2px 2px,#fff 2px 4.6px,#c2e4cf 4.6px 5.6px)"></div><div class="a" style="left:0.5px;bottom:0;right:0;height:1.6px;background:repeating-linear-gradient(90deg,#fff 0 1.2px,#c8e7d4 1.2px 2px,#fff 2px 4.6px,#c8e7d4 4.6px 5.6px)"></div><div class="t" style="left:3.2px;top:3.2px;font-size:7.6px;color:#2a2a2a">Smoke tests</div></div>
<div class="a" style="left:607.00px;top:333.20px;width:27.80px;height:14.9px;border:1px solid #a6d6b9;border-left:2.8px solid #1f9d4a;border-radius:1.5px;background:#fff;overflow:hidden"><div class="a" style="left:0.5px;top:0;right:0;height:2px;background:repeating-linear-gradient(90deg,#fff 0 1.2px,#c2e4cf 1.2px 2px,#fff 2px 4.6px,#c2e4cf 4.6px 5.6px)"></div><div class="a" style="left:0.5px;bottom:0;right:0;height:1.6px;background:repeating-linear-gradient(90deg,#fff 0 1.2px,#c8e7d4 1.2px 2px,#fff 2px 4.6px,#c8e7d4 4.6px 5.6px)"></div><div class="t" style="left:3.2px;top:3.2px;font-size:7.6px;color:#2a2a2a">Smoke tests</div></div>
<div class="a" style="left:607.00px;top:349.50px;width:27.80px;height:14.9px;border:1px solid #a6d6b9;border-left:2.8px solid #1f9d4a;border-radius:1.5px;background:#fff;overflow:hidden"><div class="a" style="left:0.5px;top:0;right:0;height:2px;background:repeating-linear-gradient(90deg,#fff 0 1.2px,#c2e4cf 1.2px 2px,#fff 2px 4.6px,#c2e4cf 4.6px 5.6px)"></div><div class="a" style="left:0.5px;bottom:0;right:0;height:1.6px;background:repeating-linear-gradient(90deg,#fff 0 1.2px,#c8e7d4 1.2px 2px,#fff 2px 4.6px,#c8e7d4 4.6px 5.6px)"></div><div class="t" style="left:3.2px;top:3.2px;font-size:7.6px;color:#2a2a2a">Smoke tests</div></div>
<div class="a" style="left:607.00px;top:365.90px;width:27.80px;height:14.9px;border:1px solid #a6d6b9;border-left:2.8px solid #1f9d4a;border-radius:1.5px;background:#fff;overflow:hidden"><div class="a" style="left:0.5px;top:0;right:0;height:2px;background:repeating-linear-gradient(90deg,#fff 0 1.2px,#c2e4cf 1.2px 2px,#fff 2px 4.6px,#c2e4cf 4.6px 5.6px)"></div><div class="a" style="left:0.5px;bottom:0;right:0;height:1.6px;background:repeating-linear-gradient(90deg,#fff 0 1.2px,#c8e7d4 1.2px 2px,#fff 2px 4.6px,#c8e7d4 4.6px 5.6px)"></div><div class="t" style="left:3.2px;top:3.2px;font-size:7.6px;color:#2a2a2a">Smoke tests</div></div>
<div class="a" style="left:607.00px;top:382.20px;width:27.80px;height:14.9px;border:1px solid #a6d6b9;border-left:2.8px solid #1f9d4a;border-radius:1.5px;background:#fff;overflow:hidden"><div class="a" style="left:0.5px;top:0;right:0;height:2px;background:repeating-linear-gradient(90deg,#fff 0 1.2px,#c2e4cf 1.2px 2px,#fff 2px 4.6px,#c2e4cf 4.6px 5.6px)"></div><div class="a" style="left:0.5px;bottom:0;right:0;height:1.6px;background:repeating-linear-gradient(90deg,#fff 0 1.2px,#c8e7d4 1.2px 2px,#fff 2px 4.6px,#c8e7d4 4.6px 5.6px)"></div><div class="t" style="left:3.2px;top:3.2px;font-size:7.6px;color:#2a2a2a">Smoke tests</div></div>
<div class="a" style="left:607.00px;top:398.50px;width:27.80px;height:14.9px;border:1px solid #a6d6b9;border-left:2.8px solid #1f9d4a;border-radius:1.5px;background:#fff;overflow:hidden"><div class="a" style="left:0.5px;top:0;right:0;height:2px;background:repeating-linear-gradient(90deg,#fff 0 1.2px,#c2e4cf 1.2px 2px,#fff 2px 4.6px,#c2e4cf 4.6px 5.6px)"></div><div class="a" style="left:0.5px;bottom:0;right:0;height:1.6px;background:repeating-linear-gradient(90deg,#fff 0 1.2px,#c8e7d4 1.2px 2px,#fff 2px 4.6px,#c8e7d4 4.6px 5.6px)"></div><div class="t" style="left:3.2px;top:3.2px;font-size:7.6px;color:#2a2a2a">Smoke tests</div></div>
<div class="a" style="left:662.00px;top:333.20px;width:27.10px;height:14.9px;border:1px solid #a6d6b9;border-left:2.8px solid #1f9d4a;border-radius:1.5px;background:#fff;overflow:hidden"><div class="a" style="left:0.5px;top:0;right:0;height:2px;background:repeating-linear-gradient(90deg,#fff 0 1.2px,#c2e4cf 1.2px 2px,#fff 2px 4.6px,#c2e4cf 4.6px 5.6px)"></div><div class="a" style="left:0.5px;bottom:0;right:0;height:1.6px;background:repeating-linear-gradient(90deg,#fff 0 1.2px,#c8e7d4 1.2px 2px,#fff 2px 4.6px,#c8e7d4 4.6px 5.6px)"></div><div class="t" style="left:3.2px;top:3.2px;font-size:7.6px;color:#2a2a2a">Smoke tests</div></div>
<div class="a" style="left:662.00px;top:349.50px;width:27.10px;height:14.9px;border:1px solid #a6d6b9;border-left:2.8px solid #1f9d4a;border-radius:1.5px;background:#fff;overflow:hidden"><div class="a" style="left:0.5px;top:0;right:0;height:2px;background:repeating-linear-gradient(90deg,#fff 0 1.2px,#c2e4cf 1.2px 2px,#fff 2px 4.6px,#c2e4cf 4.6px 5.6px)"></div><div class="a" style="left:0.5px;bottom:0;right:0;height:1.6px;background:repeating-linear-gradient(90deg,#fff 0 1.2px,#c8e7d4 1.2px 2px,#fff 2px 4.6px,#c8e7d4 4.6px 5.6px)"></div><div class="t" style="left:3.2px;top:3.2px;font-size:7.6px;color:#2a2a2a">Smoke tests</div></div>
<div class="a" style="left:662.00px;top:365.90px;width:27.10px;height:14.9px;border:1px solid #a6d6b9;border-left:2.8px solid #1f9d4a;border-radius:1.5px;background:#fff;overflow:hidden"><div class="a" style="left:0.5px;top:0;right:0;height:2px;background:repeating-linear-gradient(90deg,#fff 0 1.2px,#c2e4cf 1.2px 2px,#fff 2px 4.6px,#c2e4cf 4.6px 5.6px)"></div><div class="a" style="left:0.5px;bottom:0;right:0;height:1.6px;background:repeating-linear-gradient(90deg,#fff 0 1.2px,#c8e7d4 1.2px 2px,#fff 2px 4.6px,#c8e7d4 4.6px 5.6px)"></div><div class="t" style="left:3.2px;top:3.2px;font-size:7.6px;color:#2a2a2a">Smoke tests</div></div>
<div class="a" style="left:662.00px;top:382.20px;width:27.10px;height:14.9px;border:1px solid #a6d6b9;border-left:2.8px solid #1f9d4a;border-radius:1.5px;background:#fff;overflow:hidden"><div class="a" style="left:0.5px;top:0;right:0;height:2px;background:repeating-linear-gradient(90deg,#fff 0 1.2px,#c2e4cf 1.2px 2px,#fff 2px 4.6px,#c2e4cf 4.6px 5.6px)"></div><div class="a" style="left:0.5px;bottom:0;right:0;height:1.6px;background:repeating-linear-gradient(90deg,#fff 0 1.2px,#c8e7d4 1.2px 2px,#fff 2px 4.6px,#c8e7d4 4.6px 5.6px)"></div><div class="t" style="left:3.2px;top:3.2px;font-size:7.6px;color:#2a2a2a">Smoke tests</div></div>
<div class="a" style="left:662.00px;top:398.50px;width:27.10px;height:14.9px;border:1px solid #a6d6b9;border-left:2.8px solid #1f9d4a;border-radius:1.5px;background:#fff;overflow:hidden"><div class="a" style="left:0.5px;top:0;right:0;height:2px;background:repeating-linear-gradient(90deg,#fff 0 1.2px,#c2e4cf 1.2px 2px,#fff 2px 4.6px,#c2e4cf 4.6px 5.6px)"></div><div class="a" style="left:0.5px;bottom:0;right:0;height:1.6px;background:repeating-linear-gradient(90deg,#fff 0 1.2px,#c8e7d4 1.2px 2px,#fff 2px 4.6px,#c8e7d4 4.6px 5.6px)"></div><div class="t" style="left:3.2px;top:3.2px;font-size:7.6px;color:#2a2a2a">Smoke tests</div></div>
<div class="a" style="left:716.10px;top:333.20px;width:27.40px;height:14.9px;border:1px solid #a6d6b9;border-left:2.8px solid #1f9d4a;border-radius:1.5px;background:#fff;overflow:hidden"><div class="a" style="left:0.5px;top:0;right:0;height:2px;background:repeating-linear-gradient(90deg,#fff 0 1.2px,#c2e4cf 1.2px 2px,#fff 2px 4.6px,#c2e4cf 4.6px 5.6px)"></div><div class="a" style="left:0.5px;bottom:0;right:0;height:1.6px;background:repeating-linear-gradient(90deg,#fff 0 1.2px,#c8e7d4 1.2px 2px,#fff 2px 4.6px,#c8e7d4 4.6px 5.6px)"></div><div class="t" style="left:3.2px;top:3.2px;font-size:7.6px;color:#2a2a2a">Smoke tests</div></div>
<div class="a" style="left:716.10px;top:349.50px;width:27.40px;height:14.9px;border:1px solid #a6d6b9;border-left:2.8px solid #1f9d4a;border-radius:1.5px;background:#fff;overflow:hidden"><div class="a" style="left:0.5px;top:0;right:0;height:2px;background:repeating-linear-gradient(90deg,#fff 0 1.2px,#c2e4cf 1.2px 2px,#fff 2px 4.6px,#c2e4cf 4.6px 5.6px)"></div><div class="a" style="left:0.5px;bottom:0;right:0;height:1.6px;background:repeating-linear-gradient(90deg,#fff 0 1.2px,#c8e7d4 1.2px 2px,#fff 2px 4.6px,#c8e7d4 4.6px 5.6px)"></div><div class="t" style="left:3.2px;top:3.2px;font-size:7.6px;color:#2a2a2a">Smoke tests</div></div>
<div class="a" style="left:716.10px;top:365.90px;width:27.40px;height:14.9px;border:1px solid #a6d6b9;border-left:2.8px solid #1f9d4a;border-radius:1.5px;background:#fff;overflow:hidden"><div class="a" style="left:0.5px;top:0;right:0;height:2px;background:repeating-linear-gradient(90deg,#fff 0 1.2px,#c2e4cf 1.2px 2px,#fff 2px 4.6px,#c2e4cf 4.6px 5.6px)"></div><div class="a" style="left:0.5px;bottom:0;right:0;height:1.6px;background:repeating-linear-gradient(90deg,#fff 0 1.2px,#c8e7d4 1.2px 2px,#fff 2px 4.6px,#c8e7d4 4.6px 5.6px)"></div><div class="t" style="left:3.2px;top:3.2px;font-size:7.6px;color:#2a2a2a">Smoke tests</div></div>
<div class="a" style="left:716.10px;top:382.20px;width:27.40px;height:14.9px;border:1px solid #a6d6b9;border-left:2.8px solid #1f9d4a;border-radius:1.5px;background:#fff;overflow:hidden"><div class="a" style="left:0.5px;top:0;right:0;height:2px;background:repeating-linear-gradient(90deg,#fff 0 1.2px,#c2e4cf 1.2px 2px,#fff 2px 4.6px,#c2e4cf 4.6px 5.6px)"></div><div class="a" style="left:0.5px;bottom:0;right:0;height:1.6px;background:repeating-linear-gradient(90deg,#fff 0 1.2px,#c8e7d4 1.2px 2px,#fff 2px 4.6px,#c8e7d4 4.6px 5.6px)"></div><div class="t" style="left:3.2px;top:3.2px;font-size:7.6px;color:#2a2a2a">Smoke tests</div></div>
<div class="a" style="left:716.10px;top:398.50px;width:27.40px;height:14.9px;border:1px solid #a6d6b9;border-left:2.8px solid #1f9d4a;border-radius:1.5px;background:#fff;overflow:hidden"><div class="a" style="left:0.5px;top:0;right:0;height:2px;background:repeating-linear-gradient(90deg,#fff 0 1.2px,#c2e4cf 1.2px 2px,#fff 2px 4.6px,#c2e4cf 4.6px 5.6px)"></div><div class="a" style="left:0.5px;bottom:0;right:0;height:1.6px;background:repeating-linear-gradient(90deg,#fff 0 1.2px,#c8e7d4 1.2px 2px,#fff 2px 4.6px,#c8e7d4 4.6px 5.6px)"></div><div class="t" style="left:3.2px;top:3.2px;font-size:7.6px;color:#2a2a2a">Smoke tests</div></div>
<div class="a" style="left:770.20px;top:333.20px;width:27.30px;height:14.9px;border:1px solid #a6d6b9;border-left:2.8px solid #1f9d4a;border-radius:1.5px;background:#fff;overflow:hidden"><div class="a" style="left:0.5px;top:0;right:0;height:2px;background:repeating-linear-gradient(90deg,#fff 0 1.2px,#c2e4cf 1.2px 2px,#fff 2px 4.6px,#c2e4cf 4.6px 5.6px)"></div><div class="a" style="left:0.5px;bottom:0;right:0;height:1.6px;background:repeating-linear-gradient(90deg,#fff 0 1.2px,#c8e7d4 1.2px 2px,#fff 2px 4.6px,#c8e7d4 4.6px 5.6px)"></div><div class="t" style="left:3.2px;top:3.2px;font-size:7.6px;color:#2a2a2a">Smoke tests</div></div>
<div class="a" style="left:770.20px;top:349.50px;width:27.30px;height:14.9px;border:1px solid #a6d6b9;border-left:2.8px solid #1f9d4a;border-radius:1.5px;background:#fff;overflow:hidden"><div class="a" style="left:0.5px;top:0;right:0;height:2px;background:repeating-linear-gradient(90deg,#fff 0 1.2px,#c2e4cf 1.2px 2px,#fff 2px 4.6px,#c2e4cf 4.6px 5.6px)"></div><div class="a" style="left:0.5px;bottom:0;right:0;height:1.6px;background:repeating-linear-gradient(90deg,#fff 0 1.2px,#c8e7d4 1.2px 2px,#fff 2px 4.6px,#c8e7d4 4.6px 5.6px)"></div><div class="t" style="left:3.2px;top:3.2px;font-size:7.6px;color:#2a2a2a">Smoke tests</div></div>
<div class="a" style="left:770.20px;top:365.90px;width:27.30px;height:14.9px;border:1px solid #a6d6b9;border-left:2.8px solid #1f9d4a;border-radius:1.5px;background:#fff;overflow:hidden"><div class="a" style="left:0.5px;top:0;right:0;height:2px;background:repeating-linear-gradient(90deg,#fff 0 1.2px,#c2e4cf 1.2px 2px,#fff 2px 4.6px,#c2e4cf 4.6px 5.6px)"></div><div class="a" style="left:0.5px;bottom:0;right:0;height:1.6px;background:repeating-linear-gradient(90deg,#fff 0 1.2px,#c8e7d4 1.2px 2px,#fff 2px 4.6px,#c8e7d4 4.6px 5.6px)"></div><div class="t" style="left:3.2px;top:3.2px;font-size:7.6px;color:#2a2a2a">Smoke tests</div></div>
<div class="a" style="left:770.20px;top:382.20px;width:27.30px;height:14.9px;border:1px solid #a6d6b9;border-left:2.8px solid #1f9d4a;border-radius:1.5px;background:#fff;overflow:hidden"><div class="a" style="left:0.5px;top:0;right:0;height:2px;background:repeating-linear-gradient(90deg,#fff 0 1.2px,#c2e4cf 1.2px 2px,#fff 2px 4.6px,#c2e4cf 4.6px 5.6px)"></div><div class="a" style="left:0.5px;bottom:0;right:0;height:1.6px;background:repeating-linear-gradient(90deg,#fff 0 1.2px,#c8e7d4 1.2px 2px,#fff 2px 4.6px,#c8e7d4 4.6px 5.6px)"></div><div class="t" style="left:3.2px;top:3.2px;font-size:7.6px;color:#2a2a2a">Smoke tests</div></div>
<div class="a" style="left:770.20px;top:398.50px;width:27.30px;height:14.9px;border:1px solid #a6d6b9;border-left:2.8px solid #1f9d4a;border-radius:1.5px;background:#fff;overflow:hidden"><div class="a" style="left:0.5px;top:0;right:0;height:2px;background:repeating-linear-gradient(90deg,#fff 0 1.2px,#c2e4cf 1.2px 2px,#fff 2px 4.6px,#c2e4cf 4.6px 5.6px)"></div><div class="a" style="left:0.5px;bottom:0;right:0;height:1.6px;background:repeating-linear-gradient(90deg,#fff 0 1.2px,#c8e7d4 1.2px 2px,#fff 2px 4.6px,#c8e7d4 4.6px 5.6px)"></div><div class="t" style="left:3.2px;top:3.2px;font-size:7.6px;color:#2a2a2a">Smoke tests</div></div>
<div class="a" style="left:459px;top:403.7px;width:188.5px;height:93.8px;background:#fff;border-radius:4px;box-shadow:0 1.5px 5px rgba(0,0,0,.22)"></div>
<div class="t" style="left:253.00px;width:600px;text-align:center;top:408.00px;font-size:8.03px;color:#a8a8a8;transform:scaleX(0.9091);transform-origin:50% 0;">Details</div>
<svg class="a" style="left:633.00px;top:407.60px;" width="8" height="8" viewBox="0 0 8 8"><path d="M0.7 0.7 L7.1 6.7 M7.1 0.7 L0.7 6.7" stroke="#9a9a9a" stroke-width="0.8"/></svg>
<div class="a" style="left:459.50px;top:418.90px;width:187.50px;height:1.00px;background:#efefef"></div>
<div class="a" style="left:459.50px;top:434.50px;width:187.50px;height:1.00px;background:#efefef"></div>
<div class="a" style="left:459.50px;top:450.10px;width:187.50px;height:1.00px;background:#efefef"></div>
<div class="a" style="left:459.50px;top:465.70px;width:187.50px;height:1.00px;background:#efefef"></div>
<div class="a" style="left:459.50px;top:481.50px;width:187.50px;height:1.00px;background:#efefef"></div>
<div class="t" style="left:462.00px;top:424.00px;font-size:7.81px;color:#b0b0b0;transform:scaleX(0.9091);transform-origin:0 0;">Run list</div>
<div class="t" style="right:555.60px;top:424.00px;font-size:7.92px;color:#222;transform:scaleX(0.9091);transform-origin:100% 0;">Smoke tests</div>
<div class="t" style="left:462.00px;top:439.00px;font-size:7.81px;color:#b0b0b0;transform:scaleX(0.9091);transform-origin:0 0;">Start time</div>
<div class="t" style="right:555.60px;top:439.00px;font-size:8.25px;color:#222;transform:scaleX(0.9091);transform-origin:100% 0;">10/04/2020 04:17</div>
<div class="t" style="left:462.00px;top:455.00px;font-size:7.81px;color:#b0b0b0;transform:scaleX(0.9091);transform-origin:0 0;">End time</div>
<div class="t" style="right:555.60px;top:455.00px;font-size:8.25px;color:#222;transform:scaleX(0.9091);transform-origin:100% 0;">10/04/2020 04:18</div>
<div class="t" style="left:462.00px;top:471.00px;font-size:7.81px;color:#b0b0b0;transform:scaleX(0.9091);transform-origin:0 0;">Agents</div>
<div class="t" style="right:555.60px;top:471.00px;font-size:7.89px;color:#222;transform:scaleX(0.9091);transform-origin:100% 0;">5 agents</div>
<div class="t" style="left:462.00px;top:486.00px;font-size:7.81px;color:#b0b0b0;transform:scaleX(0.9091);transform-origin:0 0;">Created by</div>
</div></div>
</div></body></html>
